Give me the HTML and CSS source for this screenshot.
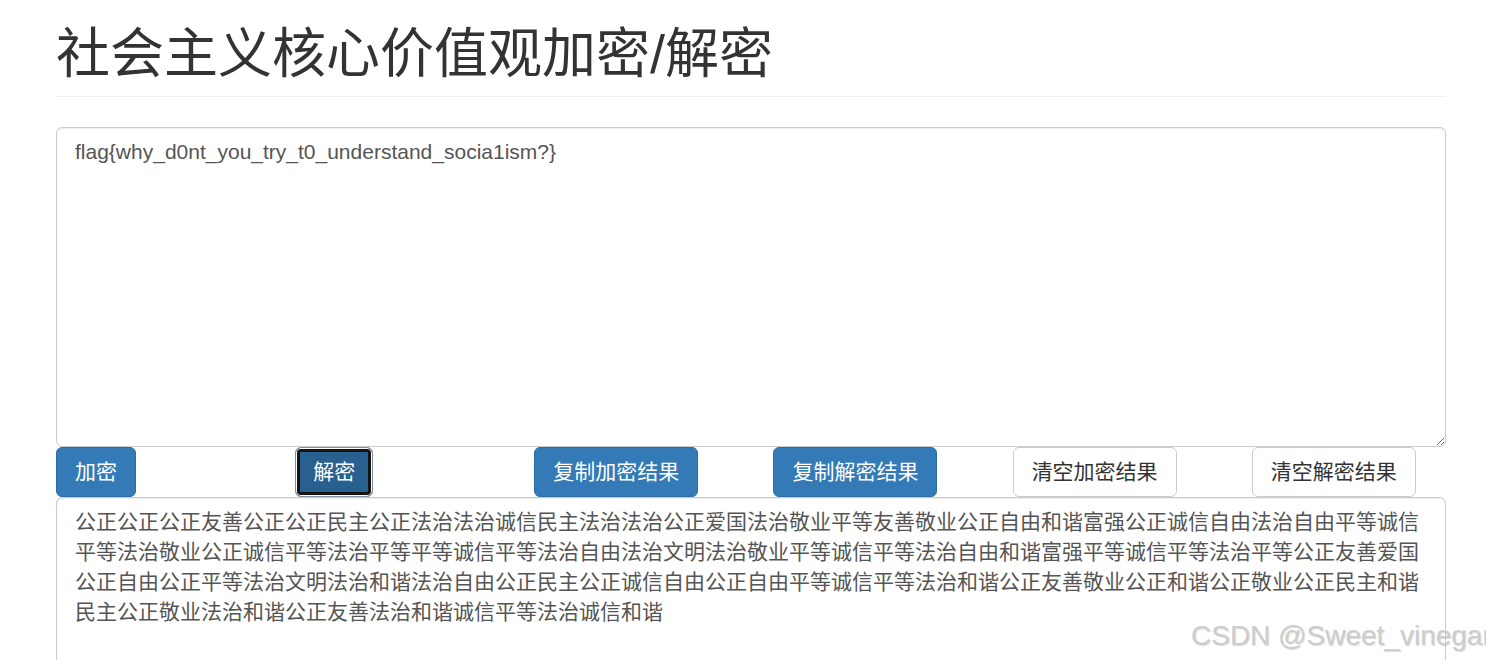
FILE: index.html
```html
<!DOCTYPE html>
<html lang="zh-CN">
<head>
<meta charset="utf-8">
<title>社会主义核心价值观加密/解密</title>
<link rel="stylesheet" href="styles.css">
</head>
<body>
<div class="container">
  <div class="page-header">
    <h1>社会主义核心价值观加密/解密</h1>
  </div>
  <textarea class="form-control input-box">flag{why_d0nt_you_try_t0_understand_socia1ism?}</textarea>
  <div class="btn-row">
    <div class="col"><button class="btn btn-primary">加密</button></div>
    <div class="col"><button class="btn btn-primary is-focused">解密</button></div>
    <div class="col"><button class="btn btn-primary">复制加密结果</button></div>
    <div class="col"><button class="btn btn-primary">复制解密结果</button></div>
    <div class="col"><button class="btn btn-default">清空加密结果</button></div>
    <div class="col"><button class="btn btn-default">清空解密结果</button></div>
  </div>
  <textarea class="form-control output-box">公正公正公正友善公正公正民主公正法治法治诚信民主法治法治公正爱国法治敬业平等友善敬业公正自由和谐富强公正诚信自由法治自由平等诚信平等法治敬业公正诚信平等法治平等平等诚信平等法治自由法治文明法治敬业平等诚信平等法治自由和谐富强平等诚信平等法治平等公正友善爱国公正自由公正平等法治文明法治和谐法治自由公正民主公正诚信自由公正自由平等诚信平等法治和谐公正友善敬业公正和谐公正敬业公正民主和谐民主公正敬业法治和谐公正友善法治和谐诚信平等法治诚信和谐</textarea>
</div>
<div class="watermark">CSDN @Sweet_vinegar</div>
</body>
</html>
```

FILE: styles.css
```css
html, body {
  margin: 0;
  padding: 0;
  background: #fff;
  overflow: hidden;
}

body {
  font-family: "Liberation Sans", "Noto Sans CJK SC", sans-serif;
  font-size: 21px;
  line-height: 30px;
  color: #333;
}

.container {
  margin-left: 56px;
  width: 1390px;
}

.page-header {
  padding-bottom: 12px;
  margin: 25px 0 30px;
  border-bottom: 1px solid #eee;
}

.page-header h1 {
  margin: 0;
  font-size: 54px;
  font-weight: 400;
  line-height: 1.1;
  color: #333;
}

.form-control {
  display: block;
  width: 100%;
  box-sizing: border-box;
  margin: 0;
  padding: 9px 18px;
  font-family: "Liberation Sans", "Noto Sans CJK SC", sans-serif;
  font-size: 21px;
  line-height: 30px;
  color: #555;
  background: #fff;
  border: 1px solid #ccc;
  border-radius: 6px;
  box-shadow: inset 0 1px 1px rgba(0, 0, 0, 0.075);
  outline: none;
}

.input-box {
  height: 320px;
  resize: vertical;
}

.output-box {
  height: 240px;
  resize: vertical;
}

.btn-row {
  display: flex;
  margin: 0 -22.5px;
}

.col {
  width: 16.6667%;
  box-sizing: border-box;
  padding: 0 22.5px;
}

.btn {
  display: inline-block;
  box-sizing: border-box;
  height: 50px;
  margin: 0;
  padding: 9px 18px;
  font-family: "Liberation Sans", "Noto Sans CJK SC", sans-serif;
  font-size: 21px;
  line-height: 30px;
  border: 1px solid transparent;
  border-radius: 6px;
  white-space: nowrap;
  cursor: pointer;
}

.btn-primary {
  color: #fff;
  background-color: #337ab7;
  border-color: #2e6da4;
}

.btn-primary.is-focused {
  background-color: #286090;
  border-color: #7d8ea0;
  box-shadow: inset 0 0 0 1px #fff, inset 0 0 0 4px #151515;
  width: 78px;
  padding: 9px 16px;
}

.btn-default {
  color: #333;
  background-color: #fff;
  border-color: #ccc;
}

.watermark {
  position: absolute;
  left: 1191px;
  top: 621px;
  font-family: "Liberation Sans", sans-serif;
  font-size: 28px;
  line-height: 30px;
  color: #cdcdcd;
  text-shadow: 1px 1px 1px rgba(0, 0, 0, 0.15);
  white-space: nowrap;
}
```
